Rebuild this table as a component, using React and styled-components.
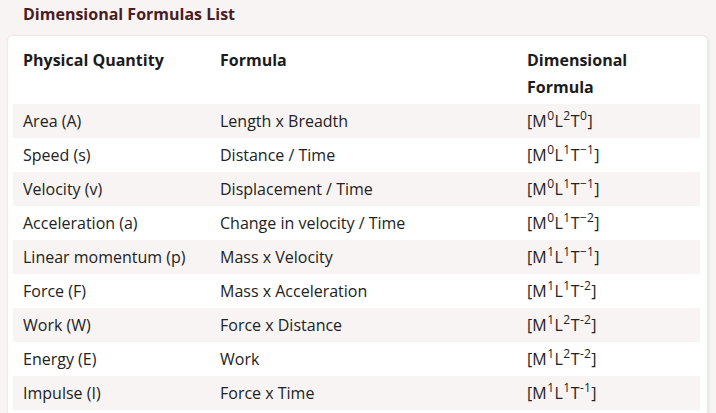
import React from 'react';
import styled, { createGlobalStyle } from 'styled-components';

const GlobalStyle = createGlobalStyle`
  html, body {
    margin: 0;
    padding: 0;
    background: #f8f4f3;
    font-family: 'Open Sans', 'DejaVu Sans', sans-serif;
  }
`;

const Page = styled.div`
  padding: 3px 8px 0 7px;
`;

const Title = styled.h2`
  margin: 0 0 9px 16px;
  font-size: 16px;
  line-height: 23px;
  font-weight: 700;
  color: #4a1c24;
`;

const Card = styled.div`
  width: 701px;
  box-sizing: border-box;
  background: #fff;
  border: 1px solid #efe9e7;
  border-radius: 6px;
  box-shadow: 1px 1px 3px rgba(0, 0, 0, 0.08);
  padding: 5px 7px 6px 5px;
`;

const Table = styled.table`
  width: 100%;
  table-layout: fixed;
  border-collapse: collapse;
  font-size: 16px;
  color: #222;
`;

const HeadCell = styled.th`
  box-sizing: border-box;
  text-align: left;
  vertical-align: top;
  font-weight: 700;
  color: #1c1c1c;
  line-height: 27px;
  padding: 6px 10px 3px;
  width: ${(p) => p.$width || 'auto'};
`;

const Row = styled.tr`
  background: ${(p) => (p.$striped ? '#f8f4f3' : '#fff')};
`;

const Cell = styled.td`
  padding: 0 10px;
  height: 34px;
  line-height: 20px;
  vertical-align: middle;
  white-space: nowrap;
`;

const Sup = styled.sup`
  font-size: 12px;
  line-height: 0;
  vertical-align: 7px;
  margin: 0 0.5px;
`;

const rows = [
  ['Area (A)', 'Length x Breadth', ['0', '2', '0']],
  ['Speed (s)', 'Distance / Time', ['0', '1', '\u22121']],
  ['Velocity (v)', 'Displacement / Time', ['0', '1', '\u22121']],
  ['Acceleration (a)', 'Change in velocity / Time', ['0', '1', '\u22122']],
  ['Linear momentum (p)', 'Mass x Velocity', ['1', '1', '\u22121']],
  ['Force (F)', 'Mass x Acceleration', ['1', '1', '-2']],
  ['Work (W)', 'Force x Distance', ['1', '2', '-2']],
  ['Energy (E)', 'Work', ['1', '2', '-2']],
  ['Impulse (I)', 'Force x Time', ['1', '1', '-1']],
];

function Dimension({ powers }) {
  const [m, l, t] = powers;
  return (
    <>
      [M<Sup>{m}</Sup>L<Sup>{l}</Sup>T<Sup>{t}</Sup>]
    </>
  );
}

function App() {
  return (
    <>
      <GlobalStyle />
      <Page>
        <Title>Dimensional Formulas List</Title>
        <Card>
          <Table>
            <thead>
              <tr>
                <HeadCell $width="197px">Physical Quantity</HeadCell>
                <HeadCell $width="307px">Formula</HeadCell>
                <HeadCell>
                  Dimensional
                  <br />
                  Formula
                </HeadCell>
              </tr>
            </thead>
            <tbody>
              {rows.map(([name, formula, powers], i) => (
                <Row key={name} $striped={i % 2 === 0}>
                  <Cell>{name}</Cell>
                  <Cell>{formula}</Cell>
                  <Cell>
                    <Dimension powers={powers} />
                  </Cell>
                </Row>
              ))}
            </tbody>
          </Table>
        </Card>
      </Page>
    </>
  );
}

export default App;
